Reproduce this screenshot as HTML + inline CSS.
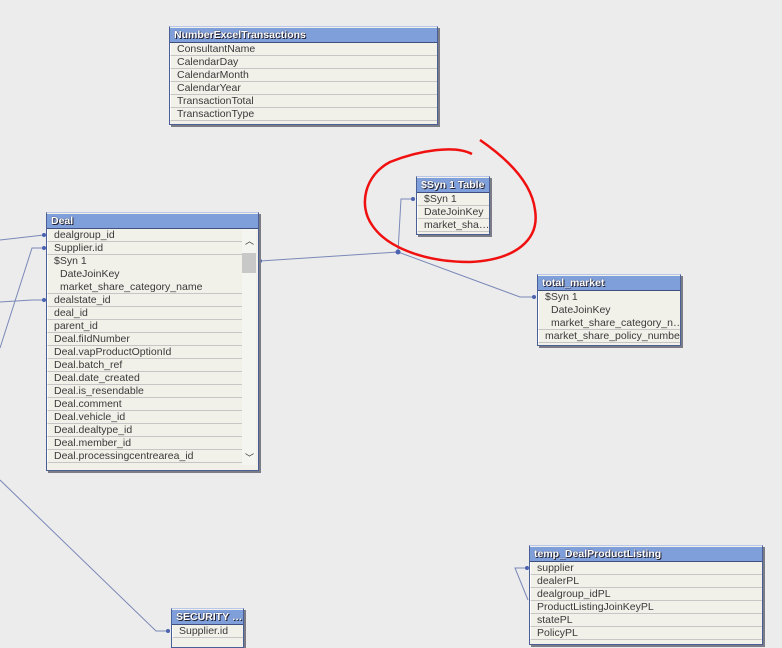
<!DOCTYPE html>
<html><head><meta charset="utf-8"><style>
body{margin:0;width:782px;height:637px;background:#ececec;overflow:hidden;position:relative;font-family:"Liberation Sans","DejaVu Sans",sans-serif;}
.t{position:absolute;background:#f1f0e9;border:1px solid #4a5f96;box-shadow:2px 2px 0 #7c7c86;box-sizing:border-box;padding-top:1px;border-top-color:#b8c6ea}
.h{height:14px;background:#7f9fdb;border-bottom:1px solid #3f5080;color:#fff;font-weight:bold;font-size:10.5px;line-height:15px;padding-left:4px;text-shadow:1px 1px 0 #223,0 0 1px #223;white-space:nowrap;overflow:hidden}
.r{height:12px;border-bottom:1px solid #c6c6c6;font-size:10.5px;line-height:13px;color:#3a3a3a;padding-left:6px;white-space:nowrap;overflow:hidden;border-left:1px solid #fff}
.n{border-bottom:none;height:13px}
.i{padding-left:12px}
</style></head><body>
<svg width="782" height="637" style="position:absolute;left:0;top:0">
<g stroke="#7a88b8" stroke-width="1" fill="none">
<polyline points="0,240 44,235"/>
<polyline points="0,348 32,248 44,248"/>
<polyline points="0,302 32,300 44,300"/>
<polyline points="0,480 156,631 168,631"/>
<polyline points="260,261 398,252 401,199 413,199"/>
<polyline points="398,252 520,297 534,297"/>
<polyline points="528,568 515,568 528,600"/>
</g>
<g fill="#4a62b0"><circle cx="44" cy="235" r="2"/><circle cx="44" cy="248" r="2"/><circle cx="44" cy="300" r="2"/><circle cx="168" cy="631" r="2"/><circle cx="260" cy="261" r="2"/><circle cx="413" cy="199" r="2"/><circle cx="398" cy="252" r="2.5"/><circle cx="534" cy="297" r="2"/><circle cx="527" cy="568" r="2"/></g>
<path d="M472 154 C455 145 420 150 390 162 C365 175 358 205 372 225 C385 245 420 262 470 262 C515 260 540 240 535 210 C532 185 512 162 480 140" stroke="#f01010" stroke-width="2.5" fill="none"/>
</svg>

<div class="t" style="left:169px;top:26px;width:269px;height:99px">
<div class="h">NumberExcelTransactions</div>
<div class="r">ConsultantName</div><div class="r">CalendarDay</div><div class="r">CalendarMonth</div><div class="r">CalendarYear</div><div class="r">TransactionTotal</div><div class="r">TransactionType</div>
</div>

<div class="t" style="left:46px;top:212px;width:213px;height:259px;overflow:hidden">
<div class="h">Deal</div>
<div style="width:195px">
<div class="r">dealgroup_id</div><div class="r">Supplier.id</div>
<div class="r n">$Syn 1</div><div class="r n i">DateJoinKey</div><div class="r i">market_share_category_name</div>
<div class="r">dealstate_id</div><div class="r">deal_id</div><div class="r">parent_id</div><div class="r">Deal.fiIdNumber</div><div class="r">Deal.vapProductOptionId</div><div class="r">Deal.batch_ref</div><div class="r">Deal.date_created</div><div class="r">Deal.is_resendable</div><div class="r">Deal.comment</div><div class="r">Deal.vehicle_id</div><div class="r">Deal.dealtype_id</div><div class="r">Deal.member_id</div><div class="r">Deal.processingcentrearea_id</div>
</div>
<div style="position:absolute;left:195px;top:16px;width:14px;height:236px;background:#f4f4f0">
<div style="position:absolute;top:5px;left:3px;font-size:9px;color:#333">︿</div>
<div style="position:absolute;top:24px;left:0;width:14px;height:20px;background:#c8c8c8"></div>
<div style="position:absolute;top:222px;left:3px;font-size:9px;color:#333">﹀</div>
</div>
</div>

<div class="t" style="left:416px;top:176px;width:74px;height:59px">
<div class="h">$Syn 1 Table</div>
<div class="r">$Syn 1</div><div class="r">DateJoinKey</div><div class="r">market_sha…</div>
</div>

<div class="t" style="left:537px;top:274px;width:144px;height:72px">
<div class="h">total_market</div>
<div class="r n">$Syn 1</div><div class="r n i">DateJoinKey</div><div class="r i">market_share_category_n…</div><div class="r">market_share_policy_number</div>
</div>

<div class="t" style="left:529px;top:545px;width:234px;height:100px">
<div class="h">temp_DealProductListing</div>
<div class="r">supplier</div><div class="r">dealerPL</div><div class="r">dealgroup_idPL</div><div class="r">ProductListingJoinKeyPL</div><div class="r">statePL</div><div class="r">PolicyPL</div>
</div>

<div class="t" style="left:171px;top:608px;width:73px;height:40px">
<div class="h">SECURITY …</div>
<div class="r">Supplier.id</div>
</div>
</body></html>
